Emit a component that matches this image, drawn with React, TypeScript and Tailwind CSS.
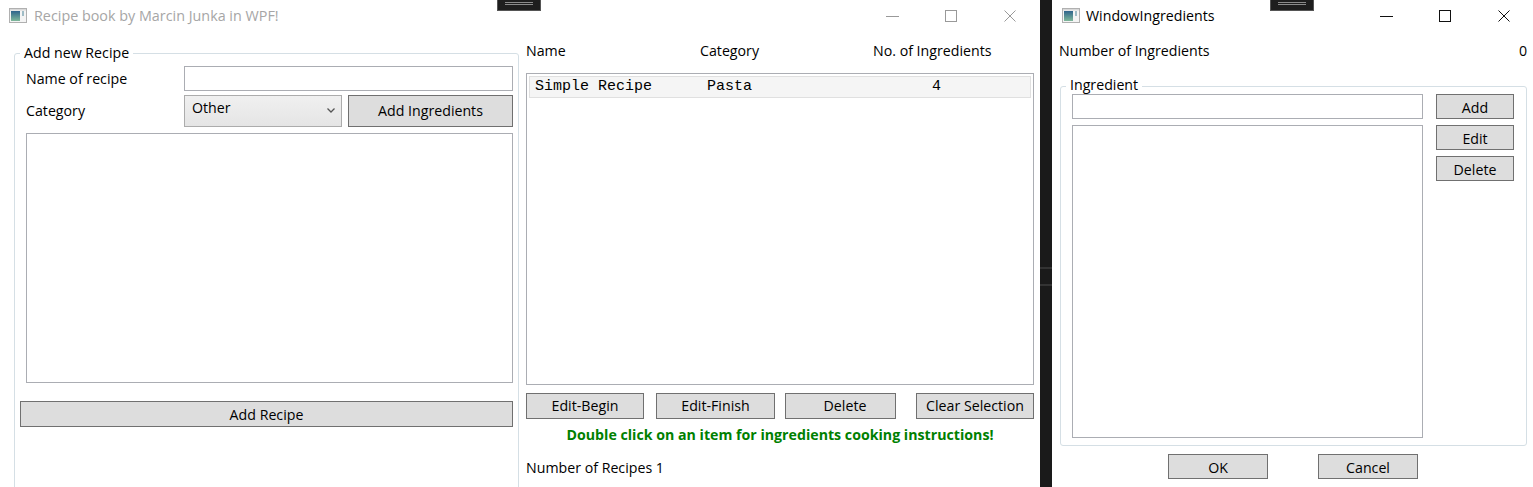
import type { ReactNode } from "react";

const uiFont = "font-['Open_Sans','Noto_Sans',sans-serif]";

function WinIcon({ id }: { id: string }) {
  return (
    <svg width="18" height="15" viewBox="0 0 18 15" className="shrink-0">
      <defs>
        <linearGradient id={id} x1="0" y1="0" x2="0" y2="1">
          <stop offset="0" stopColor="#2f648c" />
          <stop offset="1" stopColor="#7fb89a" />
        </linearGradient>
      </defs>
      <rect x="0.5" y="0.5" width="17" height="14" fill="#f4f4f4" stroke="#b0b0b0" />
      <rect x="1" y="1" width="16" height="1.5" fill="#d8d8d8" />
      <rect x="2" y="3" width="9" height="10" fill={`url(#${id})`} />
      <rect x="13" y="3" width="2" height="5" fill="#9fbcc6" />
    </svg>
  );
}

function Controls({ dim }: { dim?: boolean }) {
  const stroke = dim ? "#999999" : "#111111";
  return (
    <div className="flex items-center">
      <svg width="14" height="14" viewBox="0 0 14 14">
        <path d="M0 7.5H13" stroke={stroke} />
      </svg>
      <svg width="12" height="12" viewBox="0 0 12 12" className="ml-[45px]">
        <rect x="0.5" y="0.5" width="11" height="11" fill="none" stroke={stroke} />
      </svg>
      <svg width="12" height="12" viewBox="0 0 12 12" className="ml-[47px]">
        <path d="M0.5 0.5L11.5 11.5M11.5 0.5L0.5 11.5" stroke={stroke} />
      </svg>
    </div>
  );
}

// the little dark WPF debug toolbar stuck on the top edge
function Handle({ left }: { left: string }) {
  return (
    <div className={`absolute top-0 ${left} flex h-[11px] w-[44px] flex-col items-center justify-start gap-[1px] border border-t-0 border-[#555555] bg-[#1e1e1e] pt-[2px]`}>
      <div className="h-px w-[28px] bg-[#8a8a8a]" />
      <div className="h-px w-[28px] bg-[#8a8a8a]" />
    </div>
  );
}

function Btn({ className, children }: { className: string; children: ReactNode }) {
  return (
    <button className={`flex shrink-0 items-center justify-center border border-[#707070] bg-[#dddddd] text-[14.2px] text-black ${className}`}>
      {children}
    </button>
  );
}

function GroupBox({ label, className, labelTop, children }: { label: string; className: string; labelTop: string; children: ReactNode }) {
  return (
    <div className={`relative rounded-[3px] border border-[#d5dfe5] ${className}`}>
      <span className={`absolute ${labelTop} left-[5px] bg-white px-1 text-[14.2px] leading-[18px] text-black`}>{label}</span>
      {children}
    </div>
  );
}

export default function App() {
  return (
    <div className={`flex h-[487px] w-[1533px] overflow-hidden bg-white text-[14.2px] text-black ${uiFont}`}>
      {/* main window */}
      <div className="relative w-[1040px] shrink-0">
        <Handle left="left-[497px]" />
        <div className="flex h-[31px] items-center pl-[9px] pr-[24px]">
          <WinIcon id="iconA" />
          <span className="ml-[7px] text-[14.35px] text-[#a6a6a6]">Recipe book by Marcin Junka in WPF!</span>
          <div className="ml-auto">
            <Controls dim />
          </div>
        </div>
        <div className="flex">
          <GroupBox label="Add new Recipe" labelTop="-top-[10px]" className="ml-[14px] mt-[22px] h-[460px] w-[505px] pl-[11px] pt-[12px]">
            <div className="flex h-[25px] items-center">
              <span className="w-[158px] shrink-0">Name of recipe</span>
              <div className="h-[25px] w-[329px] border border-[#abadb3]" />
            </div>
            <div className="mt-[4px] flex h-[32px] items-center">
              <span className="w-[158px] shrink-0">Category</span>
              <div className="flex h-[32px] w-[158px] shrink-0 items-start justify-between border border-[#acacac] bg-gradient-to-b from-[#f0f0f0] to-[#e5e5e5] pl-[7px] pr-[6px] pt-[1px]">
                <span>Other</span>
                <svg width="8" height="5" viewBox="0 0 8 5" className="mt-[11px]">
                  <path d="M0.5 0.5L4 4L7.5 0.5" fill="none" stroke="#555555" strokeWidth="1.3" />
                </svg>
              </div>
              <Btn className="ml-[6px] h-[32px] w-[165px]">Add Ingredients</Btn>
            </div>
            <div className="mt-[6px] h-[250px] w-[487px] border border-[#abadb3]" />
            <Btn className="-ml-[6px] mt-[18px] h-[26px] w-[493px] pt-[2px]">Add Recipe</Btn>
          </GroupBox>

          <div className="ml-[7px] w-[508px] shrink-0">
            <div className="mt-[8px] flex h-[24px] items-center">
              <span className="w-[174px]">Name</span>
              <span className="w-[173px]">Category</span>
              <span>No. of Ingredients</span>
            </div>
            <div className="mt-[10px] h-[312px] border border-[#abadb3] p-[2px]">
              <div className="flex h-[22px] items-center border border-[#e0e0e0] bg-[#f5f5f5] pl-[5px] font-['Liberation_Mono',monospace] text-[15px]">
                <span className="w-[172px]">Simple Recipe</span>
                <span className="w-[225px]">Pasta</span>
                <span>4</span>
              </div>
            </div>
            <div className="mt-[8px] flex">
              <Btn className="h-[26px] w-[118px]">Edit-Begin</Btn>
              <Btn className="ml-[12px] h-[26px] w-[119px]">Edit-Finish</Btn>
              <Btn className="ml-[10px] h-[26px] w-[111px] pl-[9px]">Delete</Btn>
              <Btn className="ml-[20px] h-[26px] w-[118px]">Clear Selection</Btn>
            </div>
            <div className="mt-[6px] h-[20px] text-center font-bold leading-[20px] text-[#008000]">
              Double click on an item for ingredients cooking instructions!
            </div>
            <div className="mt-[13px] h-[20px] leading-[20px]">Number of Recipes 1</div>
          </div>
        </div>
      </div>

      {/* strip of desktop between the windows */}
      <div className="w-[12px] shrink-0 bg-[#1a1a1a] pt-[267px]">
        <div className="h-[2px] bg-[#333333]" />
        <div className="mt-[15px] h-[2px] bg-[#333333]" />
      </div>

      {/* ingredients window */}
      <div className="relative flex-1">
        <Handle left="left-[218px]" />
        <div className="flex h-[31px] items-center pl-[10px] pr-[23px]">
          <WinIcon id="iconB" />
          <span className="ml-[6px]">WindowIngredients</span>
          <div className="ml-auto">
            <Controls />
          </div>
        </div>
        <div className="ml-[7px] mr-[6px] mt-[8px] flex h-[24px] items-center justify-between">
          <span>Number of Ingredients</span>
          <span>0</span>
        </div>
        <GroupBox label="Ingredient" labelTop="-top-[11px]" className="ml-[8px] mt-[23px] h-[360px] w-[467px] pl-[11px] pt-[7px]">
          <div className="flex">
            <div className="w-[351px] shrink-0">
              <div className="h-[25px] border border-[#abadb3]" />
              <div className="mt-[6px] h-[313px] border border-[#abadb3]" />
            </div>
            <div className="ml-[13px] flex flex-col gap-[6px]">
              <Btn className="h-[25px] w-[78px] pt-[2px]">Add</Btn>
              <Btn className="h-[25px] w-[78px] pt-[2px]">Edit</Btn>
              <Btn className="h-[25px] w-[78px] pt-[2px]">Delete</Btn>
            </div>
          </div>
        </GroupBox>
        <div className="ml-[116px] mt-[8px] flex gap-[50px]">
          <Btn className="h-[25px] w-[100px] pt-[2px]">OK</Btn>
          <Btn className="h-[25px] w-[100px] pt-[2px]">Cancel</Btn>
        </div>
      </div>
    </div>
  );
}
